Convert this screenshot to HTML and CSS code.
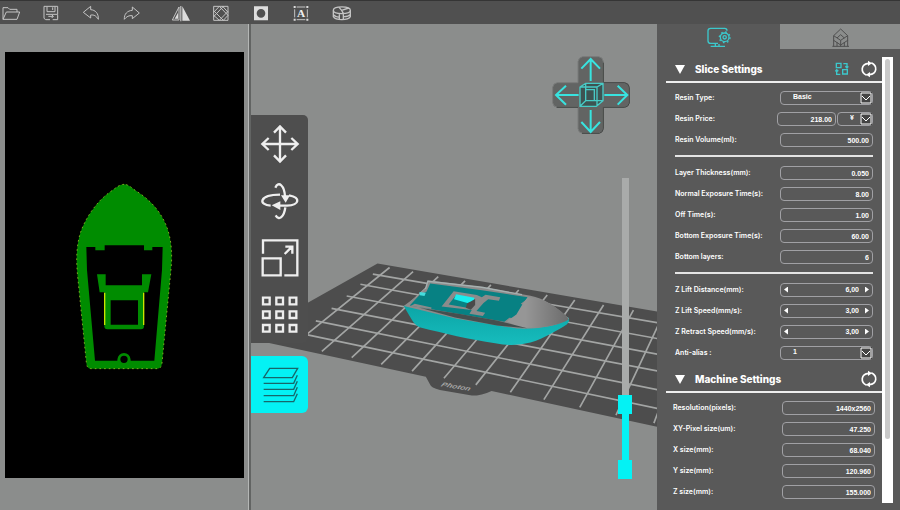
FILE: index.html
```html
<!DOCTYPE html>
<html lang="en">
<head>
<meta charset="utf-8">
<title>Slicer</title>
<link rel="stylesheet" href="styles.css">
</head>
<body>
<header class="toolbar">
  <div class="toolgroup">
    <button aria-label="Open"><svg viewBox="0 0 66 66"><path d="M9 52V17H24L29 22H51V30M9 52L19 30H59L51 52H9Z"/></svg></button>
    <button aria-label="Save"><svg viewBox="0 0 66 66"><path d="M12 13H53V36M12 13V49L17 53H30M21 14V29H45V14M38 16V24M18 37H53V46M25 43H40L35 38M40 43L35 48M38 53H53V44"/></svg></button>
    <button aria-label="Undo"><svg viewBox="0 0 66 66"><path d="M10 31L32 13V23C46 24 56 34 55 52C48 41 42 38 32 39V48Z"/></svg></button>
    <button aria-label="Redo"><svg viewBox="0 0 66 66"><path d="M58 33L37 15V25C22 26 12 36 13 52C20 43 27 40 37 41V50Z"/></svg></button>
  </div>
  <div class="toolgroup">
    <button aria-label="Mirror"><svg viewBox="0 0 66 66"><path d="M27 15V54H7Z"/><path class="solid" d="M31 12H34V58H31ZM37 13L60 56H37ZM24 32V50H14Z"/></svg></button>
    <button aria-label="Hollow"><svg viewBox="0 0 66 66"><path d="M11 13H54V55H11ZM11 31L28 13L54 40M38 13L54 31M11 40L28 55M54 40L40 55L11 26M11 44L40 13M28 55L54 28"/></svg></button>
    <button aria-label="Punch"><svg viewBox="0 0 66 66"><path class="solid" fill-rule="evenodd" d="M12 13H54V55H12ZM33 21A13 13 0 1 0 33 47A13 13 0 1 0 33 21Z"/></svg></button>
    <button aria-label="Text"><svg viewBox="0 0 66 66"><path d="M20 15H46M20 53H46M14 22V46M52 22V46"/><path class="solid" d="M11 12H17V18H11ZM49 12H55V18H49ZM11 50H17V56H11ZM49 50H55V56H49Z"/><text class="glyph" x="33" y="46" text-anchor="middle">A</text></svg></button>
    <button aria-label="Split"><svg class="bold" viewBox="0 0 66 66"><path d="M10 25C10 11 61 11 61 25C61 38 10 38 10 25ZM10 25V44C17 56 54 56 61 44V25M10 38C16 44 22 46 28 46M35 25L27 16M35 25L56 18M35 25L40 34V53M28 35V52M42 44C50 44 57 42 61 37"/></svg></button>
  </div>
</header>
<main class="workspace">
  <section class="preview" aria-label="Layer preview">
    <svg class="layer" viewBox="5 52 239 426">
      <rect x="5" y="52" width="239" height="426" fill="#000"/>
      <g transform="translate(60 170) scale(.33333)">
        <path d="M192 43C178 43 166 55 150 66C110 94 75 145 60 192C49 232 48 270 53 320L79 578Q80 596 94 596H292Q304 596 306 580L331 320C339 250 334 212 322 175C307 132 275 92 230 64C216 55 207 43 192 43Z" fill="#008c00"/>
        <path d="M192 43C178 43 166 55 150 66C110 94 75 145 60 192C49 232 48 270 53 320L79 578Q80 596 94 596H292Q304 596 306 580L331 320C339 250 334 212 322 175C307 132 275 92 230 64C216 55 207 43 192 43Z" fill="none" stroke="#b9d431" stroke-width="2" stroke-dasharray="5 9"/>
        <path d="M79 231H106V241H134V226H252V241H277V231H308L306 300L283 572H212A20 20 0 0 0 172 572H105L81 300Z" fill="#000"/>
        <path fill-rule="evenodd" d="M111 313H137V346H246V313H274L264 367H252V468Q252 478 243 478H142Q133 478 133 468V367H119ZM152 391V464H234V391Z" fill="#008c00"/>
        <path d="M134 368V465M251 368V465" stroke="#c8e600" stroke-width="4"/>
        <circle cx="192" cy="568" r="15" fill="#000" stroke="#008c00" stroke-width="8"/>
      </g>
    </svg>
  </section>
  <section class="viewport" aria-label="Model view">
    <svg class="scene" viewBox="251 24 406 486" preserveAspectRatio="xMidYMid slice">
      <defs>
        <linearGradient id="hull" x1="0" y1="0" x2="0" y2="1"><stop offset="0" stop-color="#079d9e"/><stop offset="1" stop-color="#17bcbd"/></linearGradient>
        <linearGradient id="bow" x1="0" y1="0" x2="1" y2="0"><stop offset=".3" stop-color="#969696"/><stop offset="1" stop-color="#6b6b6b"/></linearGradient>
      </defs>
      <g transform="translate(300 250) scale(.33333)">
        <path fill="#4d4d4d" d="M234 36L1200 202V552L574 416Q545 430 515 430L420 413Q394 408 389 394L378 374L-160 258Z"/>
        <g stroke="#a3a5a4" stroke-width="5" fill="none">
          <path d="M220 68L1200 235M183 98L1200 284M142 133L1200 331M97 170L1200 382M50 207L1200 439M22 248L1200 496"/>
          <path d="M270 48L22 248M340 60L68 298M415 75L157 317M495 88L245 337M572 100L337 357M655 115L432 378M740 130L527 398M822 145L630 420M908 160L730 442M997 175L837 465M1085 190L945 488M1175 205L1058 512"/>
        </g>
        <text class="brand" transform="matrix(1 .16 -.4 .7 422 402)">Photon</text>
        <path fill="url(#hull)" d="M312 163L334 200Q345 221 362 227C430 244 510 263 585 274Q640 285 690 272C735 257 774 233 799 217Q808 209 804 198L670 150L400 120Z"/>
        <path fill="#8b8b8b" d="M384 86L545 106L690 132C730 141 758 158 805 200C776 220 720 233 650 230L470 201L312 163L356 130L376 112Z"/>
        <path fill="#078183" d="M391 96L545 116L682 137L676 145L661 156L668 160L644 199L627 198L612 210L330 161L360 129L380 120Z"/>
        <path fill="url(#bow)" d="M682 136C730 142 755 158 780 178Q796 190 804 203C779 220 720 231 655 227L620 208L648 188L667 156Z"/>
        <path fill="#454f4f" d="M360 168L480 187L590 206L680 229L590 221L465 197Z"/>
        <path fill="#8b8b8b" d="M333 163L345 156L395 167L394 172Z"/>
        <path fill="#8b8b8b" fill-rule="evenodd" d="M461 119L530 130L545 137L556 129L600 137L596 147L564 143L550 154L529 178L555 183L548 193L508 186L515 175L425 164ZM469 129L446 158L497 167L524 142Z"/>
        <path fill="#19eeee" d="M468 128L523 138L522 148L502 154L462 143Z"/>
        <path fill="#4a4a4a" d="M501 155L525 142V160L512 174L497 168Z"/>
        <path fill="#45dddd" d="M359 121L378 123L374 133L360 131Z"/>
        <path stroke="#a7b0b0" stroke-width="4" fill="none" d="M377 112L384 89L545 107L665 129"/>
      </g>
    </svg>
    <nav class="tools" aria-label="Model tools">
      <div class="toolbox">
        <button aria-label="Move"><svg viewBox="0 0 120 120"><path d="M60 8V112M8 60H112M42 26L60 7L78 26M42 94L60 113L78 94M26 42L7 60L26 78M94 42L113 60L94 78"/></svg></button>
        <button aria-label="Rotate"><svg viewBox="0 0 120 120"><path d="M46 20C56-2 73 14 75 46M47 103C57 121 72 108 76 79M60 41C-5 42-5 71 32 74M87 43C123 50 119 72 81 74H59"/><path class="solid" d="M63 43H90L77 65ZM35 73L61 61V87Z"/></svg></button>
        <button aria-label="Scale"><svg viewBox="0 0 120 120"><path d="M9 47V7H112V112H73M8 61H62V112H8ZM74 48L96 26M76 26H97V47"/></svg></button>
        <button aria-label="Arrange"><svg viewBox="0 0 120 120"><path d="M9 8H29V28H9ZM49 8H69V28H49ZM89 8H109V28H89ZM9 49H29V69H9ZM49 49H69V69H49ZM89 49H109V69H89ZM9 90H29V110H9ZM49 90H69V110H49ZM89 90H109V110H89Z"/></svg></button>
      </div>
      <button class="slices" aria-label="Slice"><svg viewBox="0 0 120 120"><path d="M29 10H113L97 38H11ZM11 55H101L112 31M11 73H101L112 49M11 92H101L112 67M11 110H101L112 86"/></svg></button>
    </nav>
    <button class="navcross" aria-label="Rotate view">
      <svg viewBox="0 0 234 234"><path fill="#626463" stroke="#797b7a" stroke-width="3" d="M92 2H140Q153 4 154 17V80H220Q232 82 232 94V140Q230 153 218 154H154V218Q152 231 140 232H92Q79 230 78 218V154H16Q3 152 2 140V94Q4 81 16 80H78V17Q80 4 92 2Z"/><path fill="none" stroke="#444645" stroke-width="3" d="M154 20V80H218Q231 83 232 95V141Q229 153 218 154H154V218Q153 229 142 232H90M14 154H78"/><path fill="none" stroke="#38e3df" stroke-width="6" d="M116 75V10M88 38L116 9L144 38M116 162V226M88 198L116 228L144 198M80 117H13M42 89L12 117L42 146M157 117H224M197 89L226 117L197 146"/><path fill="#3d5352" stroke="#48cbc7" stroke-width="4" d="M84 93L101 82H153V134L133 151H84ZM84 93H135V151M135 93L153 82M101 82V134L84 151M101 134H153M101 101H127V134"/></svg>
    </button>
    <div class="layers">
      <input type="range" min="0" max="1000" value="0" aria-label="Lowest layer">
      <input type="range" min="0" max="1000" value="230" aria-label="Highest layer">
    </div>
  </section>
  <aside class="panel">
    <div class="tabs">
      <button class="tab current" aria-label="Slice settings"><svg viewBox="0 0 75 66"><path d="M36 52H14Q6 52 6 44V14Q6 7 14 7H56Q63 7 63 14M28 54V61M39 54V61M14 61H57"/><circle cx="56" cy="34" r="13"/><circle cx="56" cy="34" r="5"/><circle cx="56" cy="34" r="16" stroke-dasharray="5 7.5"/></svg></button>
      <button class="tab" aria-label="Supports"><svg viewBox="0 0 75 66"><path d="M17 29L38 9L59 29V43L38 57L17 43ZM17 29L38 43L59 29M38 43V61M17 42V61M27 48V61M49 48V61M59 42V61M13 61H63M27 36L38 26L49 36"/></svg></button>
    </div>
    <div class="scrollarea">
      <form class="settings">
        <h2><svg class="caret" viewBox="0 0 10 9"><path d="M0 0H10L5 9Z"/></svg>Slice Settings
          <span class="actions">
            <button type="button" class="swap" aria-label="Swap profile"><svg viewBox="0 0 42 42"><path d="M4 4H18V17H4ZM23 23H37V36H23ZM25 5H36V17M31 13L36 18L40 13M16 37H5V24M1 28L5 23L10 28"/></svg></button>
            <button type="button" aria-label="Reset slice settings"><svg viewBox="0 0 48 48"><path d="M17 43C-3 33 0 9 23 7M31 5C51 15 48 39 25 41"/><path class="solid" d="M21-1L33 7L21 15ZM27 33V49L15 41Z"/></svg></button>
          </span>
        </h2>
        <div class="fields">
          <div class="row"><label for="type">Resin Type:</label><span class="pick"><select id="type"><option>Basic</option></select><svg viewBox="0 0 12 12"><path d="M1 1H11V11H1ZM2 4L6 8L10 4"/></svg></span></div>
          <div class="row"><label for="price">Resin Price:</label><span class="pair"><input id="price" value="218.00"><span class="pick"><select aria-label="Currency"><option>¥</option></select><svg viewBox="0 0 12 12"><path d="M1 1H11V11H1ZM2 4L6 8L10 4"/></svg></span></span></div>
          <div class="row"><label for="vol">Resin Volume(ml):</label><input id="vol" value="500.00"></div>
          <hr>
          <div class="row"><label for="thick">Layer Thickness(mm):</label><input id="thick" value="0.050"></div>
          <div class="row"><label for="expo">Normal Exposure Time(s):</label><input id="expo" value="8.00"></div>
          <div class="row"><label for="off">Off Time(s):</label><input id="off" value="1.00"></div>
          <div class="row"><label for="bexpo">Bottom Exposure Time(s):</label><input id="bexpo" value="60.00"></div>
          <div class="row"><label for="blay">Bottom layers:</label><input id="blay" value="6"></div>
          <hr>
          <div class="row"><label for="dist">Z Lift Distance(mm):</label><span class="spin"><button type="button" class="less" aria-label="Less"></button><input id="dist" value="6,00"><button type="button" class="more" aria-label="More"></button></span></div>
          <div class="row"><label for="lift">Z Lift Speed(mm/s):</label><span class="spin"><button type="button" class="less" aria-label="Less"></button><input id="lift" value="3,00"><button type="button" class="more" aria-label="More"></button></span></div>
          <div class="row"><label for="retr">Z Retract Speed(mm/s):</label><span class="spin"><button type="button" class="less" aria-label="Less"></button><input id="retr" value="3,00"><button type="button" class="more" aria-label="More"></button></span></div>
          <div class="row"><label for="alias">Anti-alias :</label><span class="pick"><select id="alias"><option>1</option></select><svg viewBox="0 0 12 12"><path d="M1 1H11V11H1ZM2 4L6 8L10 4"/></svg></span></div>
        </div>
        <h2><svg class="caret" viewBox="0 0 10 9"><path d="M0 0H10L5 9Z"/></svg>Machine Settings
          <span class="actions">
            <button type="button" aria-label="Reset machine settings"><svg viewBox="0 0 48 48"><path d="M17 43C-3 33 0 9 23 7M31 5C51 15 48 39 25 41"/><path class="solid" d="M21-1L33 7L21 15ZM27 33V49L15 41Z"/></svg></button>
          </span>
        </h2>
        <div class="fields machine">
          <div class="row"><label for="res">Resolution(pixels):</label><input id="res" value="1440x2560"></div>
          <div class="row"><label for="xy">XY-Pixel size(um):</label><input id="xy" value="47.250"></div>
          <div class="row"><label for="xs">X size(mm):</label><input id="xs" value="68.040"></div>
          <div class="row"><label for="ys">Y size(mm):</label><input id="ys" value="120.960"></div>
          <div class="row"><label for="zs">Z size(mm):</label><input id="zs" value="155.000"></div>
        </div>
      </form>
      <div class="scrollbar"><div class="thumb"></div></div>
    </div>
  </aside>
</main>
</body>
</html>
```
FILE: styles.css
```css
* { box-sizing: border-box; }

body {
  margin: 0;
  min-height: 100vh;
  display: flex;
  flex-direction: column;
  background: #8b8d8c;
  color: #fff;
  font-family: Inter, "Liberation Sans", sans-serif;
  font-size: 7px;
  font-weight: 600;
}

button {
  padding: 0;
  border: 0;
  background: none;
  color: inherit;
  display: grid;
  place-items: center;
}

svg { display: block; fill: none; stroke: currentColor; }
svg .solid { fill: currentColor; stroke: none; }

/* Top bar */
.toolbar {
  display: flex;
  gap: 28px;
  height: 24px;
  border-top: 1px solid #353535;
  background: #505050;
  color: #c4c4c4;
}
.toolgroup { display: flex; align-items: center; gap: 18px; }
.toolgroup svg { width: 22px; height: 22px; stroke-width: 3; }
.toolgroup .bold { stroke-width: 4; }
.toolgroup .solid { fill: #ddd; }
.glyph { font: bold 34px "Liberation Serif", serif; fill: #eee; stroke: none; }

.workspace {
  flex: 1;
  display: grid;
  grid-template-columns: 251fr 406fr 243fr;
}

/* Sliced layer */
.preview {
  padding: 28px 5px 32px 5px;
  border-right: 2px solid #626463;
  box-shadow: inset -1px 0 #b4b6b5;
}
.layer { width: 100%; stroke: none; }

/* 3D view */
.viewport { position: relative; overflow: hidden; }
.scene { position: absolute; width: 100%; height: 100%; stroke: none; }
.brand { font: italic bold 25px "Liberation Sans", sans-serif; fill: #a6a6a6; }

.tools { position: absolute; top: 91px; left: 0; width: 57px; }
.toolbox { border-radius: 0 5px 5px 0; background: #4e4e4e; color: #eee; }
.tools button { width: 57px; height: 57px; }
.tools svg { width: 40px; height: 40px; stroke-width: 7; }
.tools .slices { margin-top: 13px; border-radius: 0 6px 6px 0; background: #04f2f4; color: #17676a; }
.tools .slices svg { stroke-width: 4; }

.navcross { position: absolute; top: 32px; right: 27px; }
.navcross svg { width: 78px; height: 78px; }

.layers {
  position: absolute;
  top: 154px;
  right: 25px;
  display: grid;
  width: 14px;
  height: 301px;
  background: linear-gradient(#a9abaa 75%, #04f2f4 75%) center / 7px 100% no-repeat;
}
.layers input {
  grid-area: 1 / 1;
  width: 14px;
  height: 100%;
  margin: 0;
  appearance: none;
  background: none;
  writing-mode: vertical-lr;
  direction: rtl;
  pointer-events: none;
}
.layers input::-webkit-slider-thumb {
  appearance: none;
  width: 14px;
  height: 19px;
  background: #04f2f4;
  pointer-events: auto;
}

/* Settings panel */
.panel { display: flex; flex-direction: column; background: #595959; }
.tabs { display: grid; grid-template-columns: 123fr 120fr; height: 25px; }
.tab { background: #8b8d8c; color: #4f4f4f; }
.tab svg { width: 25px; height: 22px; stroke-width: 3; }
.tab.current { background: #595959; color: #3cc8cc; }
.tab.current svg { stroke-width: 4; }

.scrollarea { flex: 1; display: flex; padding: 8px 7px 7px 0; }
.settings { flex: 1; }
.scrollbar { width: 11px; margin-bottom: 3px; padding: 2px 3px; background: #fff; }
.thumb { height: 86%; border-radius: 3px; background: #c9c9c9; }

h2 {
  display: flex;
  align-items: center;
  height: 26px;
  margin: 0 0 0 9px;
  padding-left: 9px;
  border-bottom: 2px solid #eee;
  font-size: 10px;
  font-weight: 800;
}
.caret { width: 10px; height: 9px; margin-right: 10px; fill: #fff; stroke: none; }
.actions { display: flex; align-items: center; gap: 12px; margin: 0 5px 0 auto; }
.actions svg { width: 16px; height: 16px; stroke-width: 5; overflow: visible; }
.actions .swap { color: #3cc8cc; }
.actions .swap svg { width: 14px; height: 14px; stroke-width: 4; }

.fields { padding: 4px 9px 4px 18px; }
.machine { padding: 4px 7px 4px 16px; }
.row { display: flex; align-items: center; justify-content: space-between; height: 21px; }
hr { height: 2px; margin: 5px 0; border: 0; background: #e4e4e4; }

input, select { font: bold 7px "Liberation Sans", Arial, sans-serif; color: #fff; outline: 0; }
.row > input, .pair > input, .pick, .spin {
  width: 93px;
  height: 14px;
  border: 1px solid #a0a0a4;
  border-radius: 4px;
  background: none;
}
.row > input, .pair > input { padding: 1px 3px 0; text-align: right; }

.pick { display: flex; align-items: center; }
.pick select {
  flex: 1;
  min-width: 0;
  height: 12px;
  padding: 0 0 2px 12px;
  border: 0;
  appearance: none;
  background: none;
}
.pick svg { flex: none; width: 12px; height: 12px; background: #444; }

.pair { display: flex; gap: 1px; }
.pair > input { width: 59px; }
.pair .pick { width: 36px; }

.spin { display: flex; align-items: center; padding: 0 3px; }
.spin input { flex: 1; min-width: 0; padding: 0 6px; border: 0; background: none; text-align: right; }
.spin button { width: 4px; height: 6px; background: #fff; }
.less { clip-path: polygon(100% 0, 100% 100%, 0 50%); }
.more { clip-path: polygon(0 0, 0 100%, 100% 50%); }
```
